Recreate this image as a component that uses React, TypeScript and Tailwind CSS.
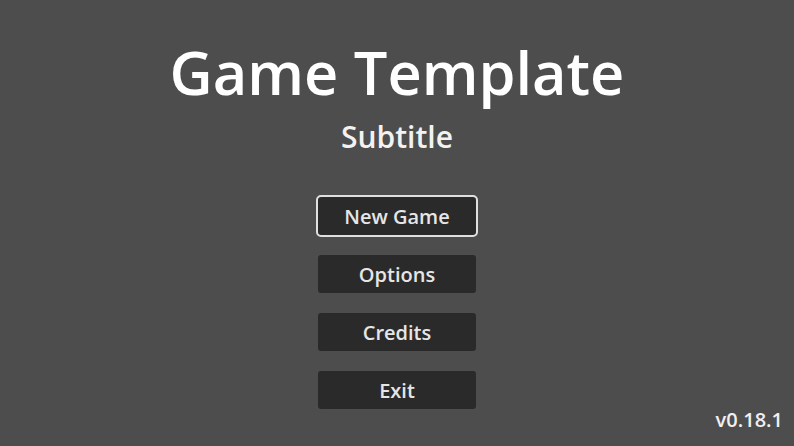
const items = ["New Game", "Options", "Credits", "Exit"];

export default function App() {
  return (
    <div
      className="relative flex h-[446px] w-[794px] flex-col items-center overflow-hidden bg-[#4d4d4d] text-white"
      style={{ fontFamily: '"Open Sans", "Noto Sans", sans-serif' }}
    >
      <h1 className="mt-[36px] text-[59.5px] font-semibold leading-[72px]">Game Template</h1>
      <h2 className="mt-[10px] text-[30px] font-semibold leading-[38px] text-[#f2f2f2]">Subtitle</h2>

      <div className="mt-[41px] flex flex-col items-center gap-[20px]">
        {items.map((label, i) => (
          <button
            key={label}
            className={
              "flex h-[38px] w-[158px] items-center justify-center rounded-[3px] bg-[#2a2a2a] pt-[2px] text-[20px] font-semibold text-[#e6e6e6] " +
              (i === 0 ? "outline-2 outline-offset-0 outline-[#e0e0e0]" : "")
            }
          >
            {label}
          </button>
        ))}
      </div>

      <div className="absolute bottom-[14px] right-[11px] text-[20px] font-semibold leading-[24px] text-[#f0f0f0]">
        v0.18.1
      </div>
    </div>
  );
}
